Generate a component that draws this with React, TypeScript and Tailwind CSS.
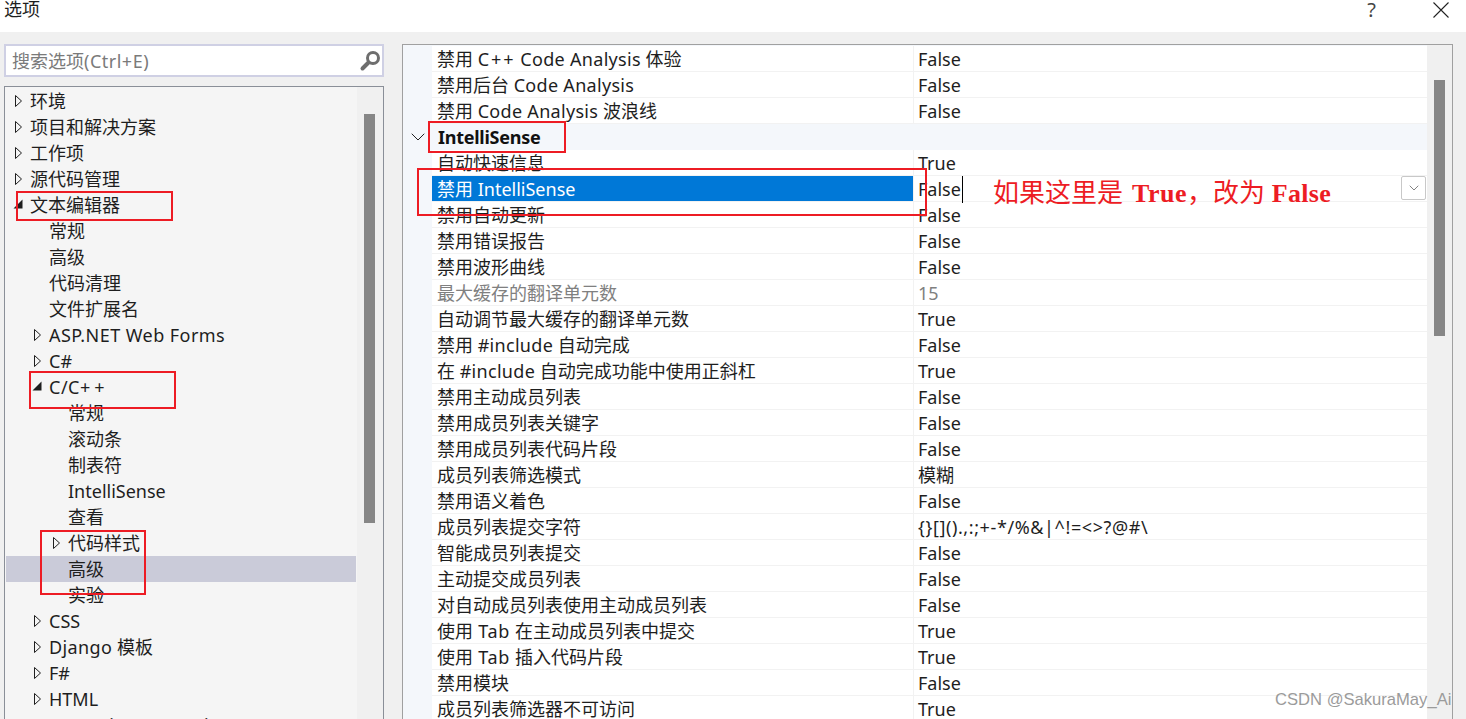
import type { ReactNode } from 'react';
import { ChevronDown } from 'lucide-react';

const font = { fontFamily: '"Noto Sans", "Noto Sans CJK SC", sans-serif' };

type TreeRow = {
  label: ReactNode;
  indent: number;
  arrow?: 'closed' | 'open';
  selected?: boolean;
};

const Wide = ({ children }: { children: ReactNode }) => (
  <span className="tracking-[0.3px]">{children}</span>
);

const treeRows: TreeRow[] = [
  { label: '环境', indent: 30, arrow: 'closed' },
  { label: '项目和解决方案', indent: 30, arrow: 'closed' },
  { label: '工作项', indent: 30, arrow: 'closed' },
  { label: '源代码管理', indent: 30, arrow: 'closed' },
  { label: '文本编辑器', indent: 30, arrow: 'open' },
  { label: '常规', indent: 49 },
  { label: '高级', indent: 49 },
  { label: '代码清理', indent: 49 },
  { label: '文件扩展名', indent: 49 },
  { label: <span className="tracking-[0.45px]">ASP.NET Web Forms</span>, indent: 49, arrow: 'closed' },
  { label: 'C#', indent: 49, arrow: 'closed' },
  { label: <span className="tracking-[0.5px]">C/C<span className="tracking-[4px]">++</span></span>, indent: 49, arrow: 'open' },
  { label: '常规', indent: 68 },
  { label: '滚动条', indent: 68 },
  { label: '制表符', indent: 68 },
  { label: 'IntelliSense', indent: 68 },
  { label: '查看', indent: 68 },
  { label: '代码样式', indent: 68, arrow: 'closed' },
  { label: '高级', indent: 68, selected: true },
  { label: '实验', indent: 68 },
  { label: 'CSS', indent: 49, arrow: 'closed' },
  { label: <><span className="tracking-[0.4px]">Django</span> 模板</>, indent: 49, arrow: 'closed' },
  { label: 'F#', indent: 49, arrow: 'closed' },
  { label: 'HTML', indent: 49, arrow: 'closed' },
  { label: 'JavaScript/TypeScript', indent: 49, arrow: 'closed' },
];

type PropRow = { name: ReactNode; value?: ReactNode; group?: boolean; active?: boolean; muted?: boolean };

const propRows: PropRow[] = [
  { name: <>禁用 <span className="tracking-[2px]">C++</span> <Wide>Code Analysis</Wide> 体验</>, value: 'False' },
  { name: <>禁用后台 <Wide>Code Analysis</Wide></>, value: 'False' },
  { name: <>禁用 <Wide>Code Analysis</Wide> 波浪线</>, value: 'False' },
  { name: 'IntelliSense', group: true },
  { name: '自动快速信息', value: 'True' },
  { name: '禁用 IntelliSense', value: 'False', active: true },
  { name: '禁用自动更新', value: 'False' },
  { name: '禁用错误报告', value: 'False' },
  { name: '禁用波形曲线', value: 'False' },
  { name: '最大缓存的翻译单元数', value: '15', muted: true },
  { name: '自动调节最大缓存的翻译单元数', value: 'True' },
  { name: <>禁用 <Wide>#include</Wide> 自动完成</>, value: 'False' },
  { name: <>在 <Wide>#include</Wide> 自动完成功能中使用正斜杠</>, value: 'True' },
  { name: '禁用主动成员列表', value: 'False' },
  { name: '禁用成员列表关键字', value: 'False' },
  { name: '禁用成员列表代码片段', value: 'False' },
  { name: '成员列表筛选模式', value: '模糊' },
  { name: '禁用语义着色', value: 'False' },
  { name: '成员列表提交字符', value: <span className="tracking-[0.6px]">{'{}[]().,:;+-*/%&|^!=<>?@#\\'}</span> },
  { name: '智能成员列表提交', value: 'False' },
  { name: '主动提交成员列表', value: 'False' },
  { name: '对自动成员列表使用主动成员列表', value: 'False' },
  { name: <>使用<span className="tracking-[0.6px]"> Tab </span>在主动成员列表中提交</>, value: 'True' },
  { name: <>使用<span className="tracking-[0.6px]"> Tab </span>插入代码片段</>, value: 'True' },
  { name: '禁用模块', value: 'False' },
  { name: '成员列表筛选器不可访问', value: 'True' },
];

function TreeArrow({ kind }: { kind: 'closed' | 'open' }) {
  if (kind === 'open') {
    return (
      <svg width="10" height="10" viewBox="0 0 10 10">
        <path d="M9.5 0.5V9.5H0.5Z" fill="#1e1e1e" />
      </svg>
    );
  }
  return (
    <svg width="8" height="14" viewBox="0 0 8 14">
      <path d="M0.5 1.5L6.5 7L0.5 12.5Z" fill="none" stroke="#1e1e1e" strokeWidth="1" />
    </svg>
  );
}

function Tree() {
  return (
    <div className="mt-[9px] flex h-[640px] w-[380px] border border-[#8a8f98] bg-[#f5f5f5]">
      <div className="min-w-0 flex-1 pl-px pr-px pt-px">
        {treeRows.map((row, i) => (
          <div
            key={i}
            className={`relative flex h-[26px] items-center whitespace-nowrap text-[18px] text-[#1e1e1e] ${
              row.selected ? 'bg-[#cacbd9]' : ''
            }`}
            style={{ paddingLeft: row.indent - 6 }}
          >
            {row.arrow === 'closed' && (
              <span className="absolute top-[6px]" style={{ left: row.indent - 21 }}>
                <TreeArrow kind="closed" />
              </span>
            )}
            {row.arrow === 'open' && (
              <span className="absolute top-[7px]" style={{ left: row.indent - 23 }}>
                <TreeArrow kind="open" />
              </span>
            )}
            <span>{row.label}</span>
          </div>
        ))}
      </div>
      <div className="w-[26px] shrink-0 bg-[#f0f0f0] pl-[7px] pt-[27px]">
        <div className="h-[409px] w-[11px] bg-[#868686]" />
      </div>
    </div>
  );
}

function PropGrid() {
  return (
    <div className="flex h-[700px] flex-1 border border-[#a0a0a0] bg-white">
      <div className="min-w-0 flex-1 bg-[#f4f7fb] pt-px">
        {propRows.map((row, i) =>
          row.group ? (
            <div
              key={i}
              className="flex h-[26px] items-center text-[18px] font-bold tracking-[-0.25px] text-[#111]"
            >
              <span className="flex w-[35px] shrink-0 pl-[3px]">
                <ChevronDown size={24} strokeWidth={1} color="#222" />
              </span>
              <span>{row.name}</span>
            </div>
          ) : (
            <div key={i} className="flex h-[26px] text-[18px] text-[#1e1e1e]">
              <div className="w-[29px] shrink-0 bg-[#f4f7fb]" />
              <div className="flex min-w-0 flex-1 border-b border-[#f2f2f2] bg-white">
                <div
                  className={`flex h-[25px] w-[482px] shrink-0 items-center whitespace-nowrap border-r border-[#f2f2f2] pl-[5px] pt-px ${
                    row.active ? 'bg-[#0078d7] text-white' : row.muted ? 'text-[#808080]' : ''
                  }`}
                >
                  <span>{row.name}</span>
                </div>
                <div
                  className={`relative flex min-w-0 flex-1 items-center whitespace-nowrap pl-[4px] pt-px ${
                    row.muted ? 'text-[#808080]' : ''
                  }`}
                >
                  {row.active ? (
                    <span className="border-r border-black pr-px">{row.value}</span>
                  ) : (
                    <span>{row.value}</span>
                  )}
                  {row.active && (
                    <span className="absolute right-px top-0 flex h-[24px] w-[25px] items-center justify-center rounded-[2px] border border-[#c8c8c8] bg-white">
                      <ChevronDown size={16} strokeWidth={1} color="#444" />
                    </span>
                  )}
                </div>
              </div>
            </div>
          ),
        )}
      </div>
      <div className="w-[25px] shrink-0 bg-[#f0f0f0] pl-[7px] pt-[35px]">
        <div className="h-[256px] w-[11px] bg-[#868686]" />
      </div>
    </div>
  );
}

function Mark({ className }: { className: string }) {
  return <div className={`pointer-events-none absolute border-[2px] border-[#ed1c24] ${className}`} />;
}

export default function App() {
  return (
    <div className="relative h-[719px] w-[1466px] overflow-hidden bg-[#f0f0f0]" style={font}>
      <div className="flex h-[32px] items-start bg-white pl-[4px] text-[18px] leading-[19px] text-[#1e1e1e]">
        <span>选项</span>
        <span className="ml-auto mr-[90px] text-[20px] leading-[19px] text-[#444]">?</span>
        <svg width="16" height="16" viewBox="0 0 16 16" className="absolute left-[1433px] top-[2px]">
          <path d="M0.5 0.5L15.5 15.5M15.5 0.5L0.5 15.5" stroke="#222" strokeWidth="1.1" fill="none" />
        </svg>
      </div>
      <div className="flex gap-[18px] pl-[4px] pr-[13px] pt-[12px]">
        <div className="w-[380px] shrink-0">
          <div className="flex h-[33px] items-center justify-between border-2 border-[#cfd0e4] bg-white pl-[6px] pr-[1px] pt-px text-[18px] text-[#7a7a7a]">
            <span>
              搜索选项<span className="tracking-[0.5px]">(Ctrl+E)</span>
            </span>
            <svg width="22" height="22" viewBox="0 0 22 22">
              <circle cx="14" cy="8" r="5.5" fill="none" stroke="#6e6e6e" strokeWidth="3" />
              <path d="M9 13L3.5 18.5" stroke="#6e6e6e" strokeWidth="4" strokeLinecap="round" />
            </svg>
          </div>
          <Tree />
        </div>
        <PropGrid />
      </div>

      <Mark className="left-[16px] top-[191px] h-[30px] w-[157px]" />
      <Mark className="left-[29px] top-[371px] h-[38px] w-[147px]" />
      <Mark className="left-[40px] top-[530px] h-[65px] w-[106px]" />
      <Mark className="left-[428px] top-[121px] h-[32px] w-[138px]" />
      <Mark className="left-[417px] top-[168px] h-[48px] w-[510px]" />

      <div
        className="absolute left-[993px] top-[177px] whitespace-nowrap text-[26px] font-bold leading-[34px] text-[#ed1c24]"
        style={{ fontFamily: '"Liberation Serif", "Noto Sans CJK SC", serif' }}
      >
        <span className="font-normal">如果这里是</span>
        <span className="pl-[2px] tracking-[0.5px]"> True</span>
        <span className="font-normal">，改为</span>
        <span className="tracking-[0.3px]"> False</span>
      </div>
      <div
        className="absolute left-[1275px] top-[689px] whitespace-nowrap text-[16.6px] leading-[22px] text-[#9b9b9b]"
        style={{ fontFamily: '"Liberation Sans", sans-serif' }}
      >
        CSDN @SakuraMay_Ai
      </div>
    </div>
  );
}
